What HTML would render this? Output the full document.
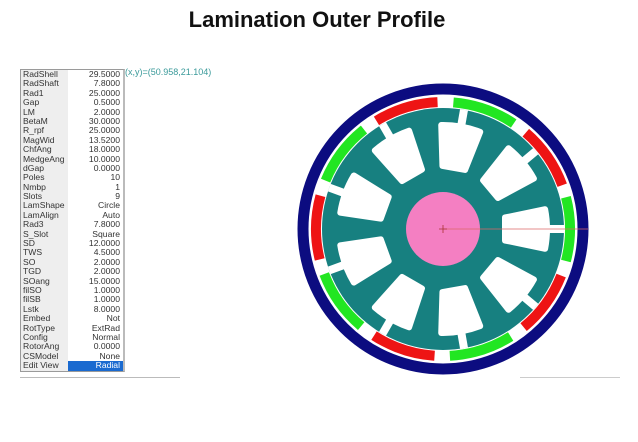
<!DOCTYPE html>
<html><head><meta charset="utf-8"><style>
body{margin:0;width:638px;height:442px;background:#fff;position:relative;overflow:hidden;font-family:"Liberation Sans",sans-serif}
h1{position:absolute;left:0;width:634px;top:7px;margin:0;text-align:center;font-size:22px;font-weight:bold;color:#111}
#tbl{position:absolute;left:20px;top:69px;width:102px;border:1px solid #9a9a9a;border-right:2px solid #bbb;background:#fff}
.r{height:9.4px;font-size:8.6px;line-height:9.4px;display:flex;color:#333;white-space:nowrap}
.r span:first-child{width:45px;background:#eee;padding-left:2px}
.r span:last-child{flex:1;text-align:right;padding-right:3px}
.sel span:last-child{background:#1a6ad0;color:#fff}
#xy{position:absolute;left:125px;top:67px;font-size:9px;color:#3a9a9a}
</style></head><body>
<h1>Lamination Outer Profile</h1>
<div id="xy">(x,y)=(50.958,21.104)</div>
<div id="tbl">
<div class="r"><span>RadShell</span><span>29.5000</span></div>
<div class="r"><span>RadShaft</span><span>7.8000</span></div>
<div class="r"><span>Rad1</span><span>25.0000</span></div>
<div class="r"><span>Gap</span><span>0.5000</span></div>
<div class="r"><span>LM</span><span>2.0000</span></div>
<div class="r"><span>BetaM</span><span>30.0000</span></div>
<div class="r"><span>R_rpf</span><span>25.0000</span></div>
<div class="r"><span>MagWid</span><span>13.5200</span></div>
<div class="r"><span>ChfAng</span><span>18.0000</span></div>
<div class="r"><span>MedgeAng</span><span>10.0000</span></div>
<div class="r"><span>dGap</span><span>0.0000</span></div>
<div class="r"><span>Poles</span><span>10</span></div>
<div class="r"><span>Nmbp</span><span>1</span></div>
<div class="r"><span>Slots</span><span>9</span></div>
<div class="r"><span>LamShape</span><span>Circle</span></div>
<div class="r"><span>LamAlign</span><span>Auto</span></div>
<div class="r"><span>Rad3</span><span>7.8000</span></div>
<div class="r"><span>S_Slot</span><span>Square</span></div>
<div class="r"><span>SD</span><span>12.0000</span></div>
<div class="r"><span>TWS</span><span>4.5000</span></div>
<div class="r"><span>SO</span><span>2.0000</span></div>
<div class="r"><span>TGD</span><span>2.0000</span></div>
<div class="r"><span>SOang</span><span>15.0000</span></div>
<div class="r"><span>filSO</span><span>1.0000</span></div>
<div class="r"><span>filSB</span><span>1.0000</span></div>
<div class="r"><span>Lstk</span><span>8.0000</span></div>
<div class="r"><span>Embed</span><span>Not</span></div>
<div class="r"><span>RotType</span><span>ExtRad</span></div>
<div class="r"><span>Config</span><span>Normal</span></div>
<div class="r"><span>RotorAng</span><span>0.0000</span></div>
<div class="r"><span>CSModel</span><span>None</span></div>
<div class="r sel"><span>Edit View</span><span>Radial</span></div>
</div>
<div style="position:absolute;left:20px;top:377px;width:160px;height:1px;background:#bbb"></div>
<div style="position:absolute;left:520px;top:377px;width:100px;height:1px;background:#ccc"></div>
<svg width="638" height="442" style="position:absolute;left:0;top:0">
<g transform="translate(443,229)">
<circle r="140" fill="none" stroke="#0c0c80" stroke-width="11"/>
<circle r="127" fill="none" stroke="#22e622" stroke-width="10" stroke-dasharray="64.5 95.7" transform="rotate(-14.5)"/>
<circle r="127" fill="none" stroke="#ee1414" stroke-width="10" stroke-dasharray="64.5 95.7" transform="rotate(21.5)"/>
<circle r="121" fill="#178080"/>
<g fill="#fff" stroke="#fff" stroke-width="6" stroke-linejoin="round">
<g id="s"><path d="M62.0,-11.5 L102.1,-19.8 A104 104 0 0 1 102.1,19.8 L62.0,11.5 Z"/><rect x="104" y="-1" width="14" height="2" stroke-linejoin="miter"/></g>
<use href="#s" transform="rotate(40)"/><use href="#s" transform="rotate(80)"/><use href="#s" transform="rotate(120)"/><use href="#s" transform="rotate(160)"/><use href="#s" transform="rotate(200)"/><use href="#s" transform="rotate(240)"/><use href="#s" transform="rotate(280)"/><use href="#s" transform="rotate(320)"/>
</g>
<circle r="37" fill="#f47fc2"/>
<line x1="0" y1="0" x2="145" y2="0" stroke="#d66" stroke-width="0.8"/>
<path d="M-4,0H4M0,-4V4" stroke="#a33" stroke-width="0.8"/>
</g>
</svg>
</body></html>
